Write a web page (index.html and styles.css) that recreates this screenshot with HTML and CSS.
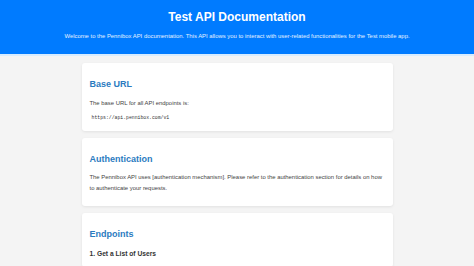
FILE: index.html
```html
<!DOCTYPE html>
<html lang="en">
<head>
    <meta charset="UTF-8">
    <meta name="viewport" content="width=device-width, initial-scale=1.0">
    <title>Test API Documentation</title>
    <link rel="stylesheet" href="styles.css">
</head>
<body>
    <header class="page-header">
        <h1>Test API Documentation</h1>
        <p>Welcome to the Pennibox API documentation. This API allows you to interact with user-related functionalities for the Test mobile app.</p>
    </header>

    <main class="container">
        <section class="card">
            <h2>Base URL</h2>
            <p>The base URL for all API endpoints is:</p>
            <pre>https://api.pennibox.com/v1</pre>
        </section>

        <section class="card">
            <h2>Authentication</h2>
            <p>The Pennibox API uses [authentication mechanism]. Please refer to the authentication section for details on how to authenticate your requests.</p>
        </section>

        <section class="card">
            <h2>Endpoints</h2>
            <h3>1. Get a List of Users</h3>
        </section>
    </main>
</body>
</html>
```

FILE: styles.css
```css
/* Global reset */
* {
    margin: 0;
    padding: 0;
    box-sizing: border-box;
}

body {
    background: #f4f4f4;
    font-family: 'Liberation Sans', Arial, sans-serif;
    color: #333333;
}

/* Header */
.page-header {
    background: #007bff;
    color: #ffffff;
    text-align: center;
    padding: 9px 10px 14px;
    border-bottom: 2px solid #d7ecff;
}

.page-header h1 {
    font-size: 12px;
    font-weight: bold;
    line-height: 16px;
}

.page-header p {
    font-size: 5.9px;
    line-height: 8px;
    margin-top: 7px;
    opacity: 0.9;
}

/* Cards */
.container {
    width: 311px;
    margin: 7px auto 0;
    display: flex;
    flex-direction: column;
    gap: 7px;
}

.card {
    background: #ffffff;
    border-radius: 3px;
    box-shadow: 0 1px 3px rgba(0, 0, 0, 0.08);
    padding: 15px 8px 8px;
}

.card h2 {
    font-size: 9px;
    font-weight: bold;
    color: #2b7bbf;
    line-height: 12px;
}

.card p {
    font-size: 5.9px;
    line-height: 11px;
    color: #444444;
    margin: 7.5px 0 4px;
}

.card pre {
    font-family: 'Liberation Mono', 'Courier New', monospace;
    font-size: 4.8px;
    line-height: 8px;
    color: #333333;
    margin: 5px 0 1px;
    padding-left: 2px;
}

.card h3 {
    font-size: 6.7px;
    font-weight: bold;
    line-height: 10px;
    color: #333333;
    margin-top: 9px;
}
```
